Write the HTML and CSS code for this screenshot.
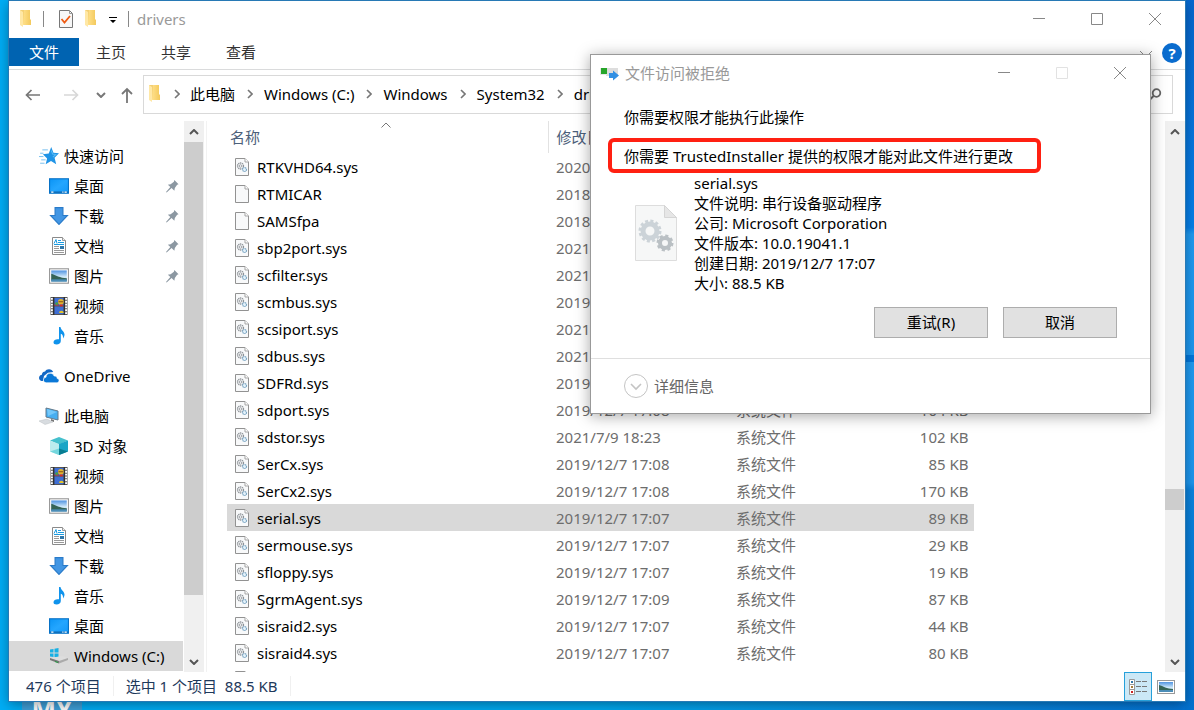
FILE: index.html
```html
<!DOCTYPE html>
<html lang="zh-CN">
<head>
  <meta charset="UTF-8">
  <meta name="viewport" content="width=device-width, initial-scale=1.0">
  <title>drivers</title>
  <link rel="stylesheet" href="styles.css">
</head>
<body>
  <!-- 图标 -->
  <svg class="sprite" aria-hidden="true">
    <defs>
      <linearGradient id="g-folder" x1="0" x2="1"><stop offset="0" stop-color="#ffe08a"/><stop offset="1" stop-color="#f3c95c"/></linearGradient>
      <linearGradient id="g-desk" x1="0" y1="0" x2="1" y2="1"><stop offset="0" stop-color="#0a94f5"/><stop offset=".5" stop-color="#24a6ff"/><stop offset="1" stop-color="#1297f8"/></linearGradient>
      <linearGradient id="g-sky" x1="0" y1="0" x2="0" y2="1"><stop offset="0" stop-color="#4f93e0"/><stop offset=".6" stop-color="#d9effb"/><stop offset="1" stop-color="#5b93b5"/></linearGradient>
    </defs>
    <symbol id="i-folder" viewBox="0 0 14 17">
      <path d="M1 0h6v14H1z" fill="#f3cf73"/><path d="M5 0h6v9l1 1v5H4z" fill="url(#g-folder)"/><path d="M1 0l3 2v15l-3-2z" fill="#ffe8a6"/>
    </symbol>
    <symbol id="i-check" viewBox="0 0 16 18">
      <path d="M1.500 .5h10l3 3v14h-13z" fill="#f7f7f7" stroke="#777"/><path d="M11.500 .5v3h3" fill="none" stroke="#999"/><path d="M3.500 9l3 3.500 5.500-6.500" fill="none" stroke="#ee5a12" stroke-width="1.800"/>
    </symbol>
    <symbol id="i-star" viewBox="0 0 18 16">
      <path d="M11 0l2 5 5 .5-4 4 1.500 6-4.700-3L6 15.500l1.300-5.300L3.500 6.500l5.300-.7z" fill="#2094e6"/><path d="M11 3l1.300 3.300 2.700.4-2.500 2.300" fill="none" stroke="#5cbcf5"/><path d="M3 2.500h5M1 5.500h3M0 8.500h4M2 11.500h4M1 14.500h4" stroke="#69b9ee" stroke-width=".8"/>
    </symbol>
    <symbol id="i-desktop" viewBox="0 0 18 14">
      <rect x=".5" y=".5" width="17" height="13" fill="url(#g-desk)" stroke="#0872c6"/><path d="M1 12.500h16" stroke="#0b5fa5"/><path d="M2 12.500h2M12 12.500h1M14 12.500h2" stroke="#fff"/>
    </symbol>
    <symbol id="i-down" viewBox="0 0 16 16">
      <path d="M4.500 .5h7v7h4L8 15.500.5 7.500h4z" fill="#4296e4" stroke="#2a7bc9"/>
    </symbol>
    <symbol id="i-doc" viewBox="0 0 16 18">
      <path d="M1.500 .5h10l3 3v14h-13z" fill="#fff" stroke="#8a8a8a"/><path d="M11.500 .5v3h3" fill="#eee" stroke="#999"/><path d="M3 6.500l2-4 1 4M7 3.500h3M7 5.500h6M3 7.500h10" fill="none" stroke="#1c9be0"/><path d="M3 9.500h5M3 11.500h5M3 13.500h10M3 15.500h10" stroke="#999"/><rect x="9" y="9" width="4" height="3" fill="#2f77a9"/>
    </symbol>
    <symbol id="i-picture" viewBox="0 0 18 14">
      <rect x=".5" y=".5" width="17" height="13" fill="#fff" stroke="#999"/><rect x="2" y="2" width="14" height="10" fill="url(#g-sky)"/><path d="M2 5c4 1 8 4 14 4v2H2z" fill="#356456"/><path d="M2 10h14v2H2z" fill="#4b8db7"/>
    </symbol>
    <symbol id="i-video" viewBox="0 0 18 19">
      <path d="M0 0h18v19H0z" fill="#555"/><path d="M1.500 1v18M16.500 1v18" stroke="#fff" stroke-width="2" stroke-dasharray="2 1"/><path d="M4 1h10v8H4zM4 10h10v8H4z" fill="#3f6fd4"/><path d="M3 0h1v19H3zM14 0h1v19h-1z" fill="#222"/><circle cx="11" cy="5" r="3" fill="#e3b52e"/><path d="M8.500 5h5" stroke="#7a4a18"/><path d="M4 8h5v1H4zM10 8h3v2h-3z" fill="#d52b20"/><circle cx="6.500" cy="7" r="1.500" fill="#43a047"/><path d="M9 17a2.500 2.500 0 015 0z" fill="#e3c52e"/>
    </symbol>
    <symbol id="i-music" viewBox="0 0 12 18">
      <path d="M6 0h1.500c.3 3 4 4.500 4 7.500 0 1.500-.6 2.800-1.500 4 .3-2.800-.6-4.300-2.200-4.800V14c0 2-1.800 3.500-4.300 3.500C1.500 17.500.5 16.500.5 15.200c0-1.700 2-3 4-3H6z" fill="#0f93ec"/>
    </symbol>
    <symbol id="i-cloud" viewBox="0 0 18 12">
      <path d="M3.500 10.500C1.500 10.500 0 9.500 0 7.700 0 6 1.200 5 2.600 4.800 2.800 3 4 2 5.500 2c.6-1.200 1.900-2 3.500-2 1.800 0 3.200 1 3.800 2.500L8 3 4.500 6z" fill="#1267c4"/><path d="M6.500 12C4.800 12 4 11 4 9.700 4 8.300 5 7.300 6.300 7.200 6.500 5 8 3.600 10 3.600c1.800 0 3 1 3.600 2.400 2 0 2.700 1 2.700 2.300 1 .1 1.700.8 1.700 1.800S17.200 12 16 12z" fill="#0a78d7" stroke="#fff" stroke-width=".5"/>
    </symbol>
    <symbol id="i-pc" viewBox="0 0 20 18">
      <path d="M7 1l12 3v9L7 10z" fill="#47aef0" stroke="#64798a"/><path d="M8 2l10 3-9 4z" fill="#74c8fa"/><path d="M12 12l3 1v2l-3-1z" fill="#777"/><path d="M0 14l8-2 6 3-8 2.500z" fill="#d8dce0" stroke="#bcc0c4" stroke-width=".5"/>
    </symbol>
    <symbol id="i-cube" viewBox="0 0 18 18">
      <path d="M9 0l9 3.500-9 4-9-4z" fill="#45c0cd"/><path d="M0 3.500l9 3.500v11l-9-3.500z" fill="#bdecee"/><path d="M18 3.500L9 7v11l9-3.500z" fill="#1aa5c6"/><path d="M9 11.500l9 3-9 3.500z" fill="#087d91"/><path d="M9 11.500l-9 3L9 18z" fill="#74d6dd"/>
    </symbol>
    <symbol id="i-drive" viewBox="0 0 20 16">
      <path d="M1 1.500l3.500-.5v3.500H1zM5.500 .8L9.500 0v4.500h-4zM1 5.500h3.500V9L1 8.500zM5.500 5.500h4v4l-4-.5z" fill="#16b0e4"/><path d="M1 10l12-2 6 2-9 3z" fill="#ddd"/><path d="M1 10l9 3v2.500L1 12z" fill="#777"/><path d="M10 13l9-3v2l-9 3.500z" fill="#aaa"/><path d="M6 13l3 1v1l-3-1z" fill="#25a244"/>
    </symbol>
    <symbol id="i-pin" viewBox="0 0 14 14">
      <path d="M9 0l4.500 4.500-1.500.5-2.500 3.500-.5 3L6 8.500.7 13.500 0 13l4.700-5.500L2 5l3-.5L8.500 2z" fill="#8c98a2"/>
    </symbol>
    <symbol id="i-file" viewBox="0 0 16 18">
      <path d="M1.500 .5h9.500l3.500 3.500v13.500h-13z" fill="#f8f9fa" stroke="#929292"/><path d="M11 .5v3.500h3.500" fill="#fff" stroke="#a5a5a5"/>
    </symbol>
    <symbol id="i-sys" viewBox="0 0 16 18">
      <path d="M1.500 .5h9.500l3.500 3.500v13.500h-13z" fill="#f8f9fa" stroke="#929292"/><path d="M11 .5v3.500h3.500" fill="#fff" stroke="#a5a5a5"/><circle cx="6.500" cy="8" r="3" fill="none" stroke="#8d9297" stroke-width="1.300" stroke-dasharray="1.300 .6"/><circle cx="6.500" cy="8" r="1.300" fill="none" stroke="#8d9297" stroke-width=".8"/><circle cx="10.500" cy="11.500" r="2" fill="#e4f2fb" stroke="#7ba5c2" stroke-width="1.200" stroke-dasharray="1.300 .5"/>
    </symbol>
    <symbol id="i-min" viewBox="0 0 12 12"><path d="M0 5.500h12" stroke="currentColor"/></symbol>
    <symbol id="i-max" viewBox="0 0 12 12"><path d="M.5 .5h11v11H.5z" fill="none" stroke="currentColor"/></symbol>
    <symbol id="i-close" viewBox="0 0 12 12"><path d="M0 0l12 12M12 0L0 12" stroke="currentColor"/></symbol>
    <symbol id="i-up" viewBox="0 0 10 6"><path d="M1 5l4-4 4 4" fill="none" stroke="currentColor" stroke-width="2"/></symbol>
    <symbol id="i-dn" viewBox="0 0 10 6"><path d="M1 1l4 4 4-4" fill="none" stroke="currentColor" stroke-width="2"/></symbol>
    <symbol id="i-right" viewBox="0 0 6 10"><path d="M1 1l4 4-4 4" fill="none" stroke="currentColor" stroke-width="1.600"/></symbol>
    <symbol id="i-back" viewBox="0 0 16 12"><path d="M15 6H1M6.500 1L1.500 6l5 5" fill="none" stroke="currentColor" stroke-width="1.700"/></symbol>
  </svg>

  <div class="desktop-label">MY</div>

  <main class="explorer">
    <header class="titlebar">
      <svg class="icon folder"><use href="#i-folder"/></svg>
      <span class="divider"></span>
      <button class="quick" aria-label="属性"><svg class="icon sheet"><use href="#i-check"/></svg></button>
      <button class="quick" aria-label="新建文件夹"><svg class="icon folder"><use href="#i-folder"/></svg></button>
      <button class="quick menu" aria-label="自定义快速访问工具栏"><svg width="8" height="6" viewBox="0 0 8 6"><path d="M0 0h8v1H0zM1 3h6L4 6z"/></svg></button>
      <span class="divider"></span>
      <h1 class="title">drivers</h1>
      <div class="controls">
        <button aria-label="最小化"><svg class="glyph"><use href="#i-min"/></svg></button>
        <button aria-label="最大化"><svg class="glyph"><use href="#i-max"/></svg></button>
        <button aria-label="关闭"><svg class="glyph"><use href="#i-close"/></svg></button>
      </div>
    </header>

    <nav class="ribbon">
      <button class="tab active">文件</button>
      <button class="tab">主页</button>
      <button class="tab">共享</button>
      <button class="tab">查看</button>
      <button class="expand" aria-label="展开功能区"><svg width="12" height="7" viewBox="0 0 12 7"><path d="M0 0l6 6 6-6" fill="none" stroke="#888"/></svg></button>
      <button class="help" aria-label="帮助">?</button>
    </nav>

    <div class="address">
      <div class="history">
        <button aria-label="后退"><svg class="arrow"><use href="#i-back"/></svg></button>
        <button class="off" aria-label="前进"><svg class="arrow" viewBox="0 0 16 12"><path d="M1 6h14M9.500 1l5 5-5 5" fill="none" stroke="currentColor" stroke-width="1.700"/></svg></button>
        <button class="recent" aria-label="最近位置"><svg class="chev"><use href="#i-dn"/></svg></button>
        <button class="parent" aria-label="上移"><svg width="12" height="16" viewBox="0 0 12 16"><path d="M6 16V2M1 7l5-5 5 5" fill="none" stroke="currentColor" stroke-width="1.800"/></svg></button>
      </div>
      <div class="path">
        <svg class="icon folder"><use href="#i-folder"/></svg>
        <svg class="sep"><use href="#i-right"/></svg><a href="#">此电脑</a>
        <svg class="sep"><use href="#i-right"/></svg><a href="#">Windows (C:)</a>
        <svg class="sep"><use href="#i-right"/></svg><a href="#">Windows</a>
        <svg class="sep"><use href="#i-right"/></svg><a href="#">System32</a>
        <svg class="sep"><use href="#i-right"/></svg><a href="#">drivers</a>
      </div>
      <div class="search">
        <input type="search" aria-label="搜索">
        <svg width="14" height="14" viewBox="0 0 14 14"><circle cx="8.500" cy="5" r="3.800" fill="none" stroke="#666" stroke-width="1.800"/><path d="M5.500 8L1 12.500" stroke="#666" stroke-width="2"/></svg>
      </div>
    </div>

    <div class="content">
      <nav class="tree">
        <a class="root" href="#"><svg class="icon"><use href="#i-star"/></svg>快速访问</a>
        <a href="#"><svg class="icon"><use href="#i-desktop"/></svg>桌面<svg class="pin"><use href="#i-pin"/></svg></a>
        <a href="#"><svg class="icon"><use href="#i-down"/></svg>下载<svg class="pin"><use href="#i-pin"/></svg></a>
        <a href="#"><svg class="icon"><use href="#i-doc"/></svg>文档<svg class="pin"><use href="#i-pin"/></svg></a>
        <a href="#"><svg class="icon"><use href="#i-picture"/></svg>图片<svg class="pin"><use href="#i-pin"/></svg></a>
        <a href="#"><svg class="icon"><use href="#i-video"/></svg>视频</a>
        <a href="#"><svg class="icon"><use href="#i-music"/></svg>音乐</a>
        <a class="root" href="#"><svg class="icon"><use href="#i-cloud"/></svg>OneDrive</a>
        <a class="root" href="#"><svg class="icon"><use href="#i-pc"/></svg>此电脑</a>
        <a href="#"><svg class="icon"><use href="#i-cube"/></svg>3D 对象</a>
        <a href="#"><svg class="icon"><use href="#i-video"/></svg>视频</a>
        <a href="#"><svg class="icon"><use href="#i-picture"/></svg>图片</a>
        <a href="#"><svg class="icon"><use href="#i-doc"/></svg>文档</a>
        <a href="#"><svg class="icon"><use href="#i-down"/></svg>下载</a>
        <a href="#"><svg class="icon"><use href="#i-music"/></svg>音乐</a>
        <a href="#"><svg class="icon"><use href="#i-desktop"/></svg>桌面</a>
        <a class="current" href="#"><svg class="icon"><use href="#i-drive"/></svg>Windows (C:)</a>
      </nav>
      <div class="scrollbar tree-scroll">
        <button aria-label="向上滚动"><svg class="chev"><use href="#i-up"/></svg></button>
        <div class="track"><div class="thumb"></div></div>
        <button aria-label="向下滚动"><svg class="chev"><use href="#i-dn"/></svg></button>
      </div>

      <div class="files">
        <table>
          <colgroup><col class="c-name"><col class="c-date"><col class="c-type"><col class="c-size"></colgroup>
          <thead>
            <tr>
              <th>名称<svg class="sort" viewBox="0 0 10 6"><path d="M.5 5.500L5 1l4.500 4.500" fill="none" stroke="#777"/></svg></th>
              <th>修改日期</th><th></th><th></th>
            </tr>
          </thead>
          <tbody>
            <tr><td><svg class="file"><use href="#i-sys"/></svg>RTKVHD64.sys</td><td>2020</td><td></td><td></td></tr>
            <tr><td><svg class="file"><use href="#i-file"/></svg>RTMICAR</td><td>2018</td><td></td><td></td></tr>
            <tr><td><svg class="file"><use href="#i-file"/></svg>SAMSfpa</td><td>2018</td><td></td><td></td></tr>
            <tr><td><svg class="file"><use href="#i-sys"/></svg>sbp2port.sys</td><td>2021</td><td></td><td></td></tr>
            <tr><td><svg class="file"><use href="#i-sys"/></svg>scfilter.sys</td><td>2021</td><td></td><td></td></tr>
            <tr><td><svg class="file"><use href="#i-sys"/></svg>scmbus.sys</td><td>2019</td><td></td><td></td></tr>
            <tr><td><svg class="file"><use href="#i-sys"/></svg>scsiport.sys</td><td>2021</td><td></td><td></td></tr>
            <tr><td><svg class="file"><use href="#i-sys"/></svg>sdbus.sys</td><td>2021</td><td></td><td></td></tr>
            <tr><td><svg class="file"><use href="#i-sys"/></svg>SDFRd.sys</td><td>2019</td><td></td><td></td></tr>
            <tr><td><svg class="file"><use href="#i-sys"/></svg>sdport.sys</td><td>2019/12/7 17:08</td><td>系统文件</td><td>104 KB</td></tr>
            <tr><td><svg class="file"><use href="#i-sys"/></svg>sdstor.sys</td><td>2021/7/9 18:23</td><td>系统文件</td><td>102 KB</td></tr>
            <tr><td><svg class="file"><use href="#i-sys"/></svg>SerCx.sys</td><td>2019/12/7 17:08</td><td>系统文件</td><td>85 KB</td></tr>
            <tr><td><svg class="file"><use href="#i-sys"/></svg>SerCx2.sys</td><td>2019/12/7 17:08</td><td>系统文件</td><td>170 KB</td></tr>
            <tr class="selected"><td><svg class="file"><use href="#i-sys"/></svg>serial.sys</td><td>2019/12/7 17:07</td><td>系统文件</td><td>89 KB</td></tr>
            <tr><td><svg class="file"><use href="#i-sys"/></svg>sermouse.sys</td><td>2019/12/7 17:07</td><td>系统文件</td><td>29 KB</td></tr>
            <tr><td><svg class="file"><use href="#i-sys"/></svg>sfloppy.sys</td><td>2019/12/7 17:07</td><td>系统文件</td><td>19 KB</td></tr>
            <tr><td><svg class="file"><use href="#i-sys"/></svg>SgrmAgent.sys</td><td>2019/12/7 17:09</td><td>系统文件</td><td>87 KB</td></tr>
            <tr><td><svg class="file"><use href="#i-sys"/></svg>sisraid2.sys</td><td>2019/12/7 17:07</td><td>系统文件</td><td>44 KB</td></tr>
            <tr><td><svg class="file"><use href="#i-sys"/></svg>sisraid4.sys</td><td>2019/12/7 17:07</td><td>系统文件</td><td>80 KB</td></tr>
            <tr><td><svg class="file"><use href="#i-sys"/></svg></td><td></td><td></td><td></td></tr>
          </tbody>
        </table>
      </div>
      <div class="scrollbar list-scroll">
        <button aria-label="向上滚动"><svg class="chev"><use href="#i-up"/></svg></button>
        <div class="track"><div class="thumb"></div></div>
        <button aria-label="向下滚动"><svg class="chev"><use href="#i-dn"/></svg></button>
      </div>
    </div>

    <footer class="status">
      <span class="count">476 个项目</span>
      <span class="picked">选中 1 个项目&nbsp; 88.5 KB</span>
      <div class="views">
        <button class="on" aria-label="详细信息视图"><svg width="18" height="16" viewBox="0 0 18 16"><path d="M.5 .5h5v15h-5zM.5 5.500h5M.5 10.500h5" fill="#fff" stroke="#999"/><path d="M2 2h2v2H2z" fill="#2f77a9"/><path d="M2 7h2v2H2z" fill="#a57d3a"/><path d="M2 12h2v2H2z" fill="#c22"/><path d="M7 2.500h5M13 2.500h5M7 7.500h5M13 7.500h5M7 12.500h5M13 12.500h5" stroke="#777"/></svg></button>
        <button aria-label="大图标视图"><svg width="18" height="14"><use href="#i-picture"/></svg></button>
      </div>
    </footer>
  </main>

  <section class="dialog" role="dialog" aria-labelledby="dialog-title">
    <header class="dialog-title">
      <svg width="20" height="16" viewBox="0 0 20 16"><path d="M6 3h12v8H6z" fill="#ddd"/><path d="M0 3h7v7H0z" fill="#e8e8e8"/><path d="M1 3h6v6H1z" fill="#27a52a"/><path d="M9 8h4V5.500l6 5-6 5V13H9z" fill="#3390e3"/></svg>
      <h2 id="dialog-title">文件访问被拒绝</h2>
      <div class="controls">
        <button aria-label="最小化"><svg class="glyph"><use href="#i-min"/></svg></button>
        <button aria-label="最大化" disabled><svg class="glyph"><use href="#i-max"/></svg></button>
        <button aria-label="关闭"><svg class="glyph"><use href="#i-close"/></svg></button>
      </div>
    </header>
    <p class="lead">你需要权限才能执行此操作</p>
    <p class="marked">你需要 TrustedInstaller 提供的权限才能对此文件进行更改</p>
    <div class="details">
      <svg width="42" height="56" viewBox="0 0 42 56">
        <path d="M.5 .5h29l12 12v43H.5z" fill="#f6f7f7" stroke="#ddd"/><path d="M29.500 .5v12h12z" fill="#e6e6e6" stroke="#d5d5d5"/>
        <g fill="none" stroke="#ccd3d8"><circle cx="15" cy="26" r="7" stroke-width="5"/><circle cx="15" cy="26" r="10" stroke-width="3" stroke-dasharray="3 2.240"/></g>
        <g fill="none" stroke="#bac0c4"><circle cx="30" cy="38" r="5" stroke-width="4"/><circle cx="30" cy="38" r="7" stroke-width="3" stroke-dasharray="3 2.500"/></g>
      </svg>
      <ul>
        <li>serial.sys</li>
        <li>文件说明: 串行设备驱动程序</li>
        <li>公司: Microsoft Corporation</li>
        <li>文件版本: 10.0.19041.1</li>
        <li>创建日期: 2019/12/7 17:07</li>
        <li>大小: 88.5 KB</li>
      </ul>
    </div>
    <div class="actions">
      <button>重试(R)</button>
      <button>取消</button>
    </div>
    <footer class="more">
      <button><svg width="24" height="24" viewBox="0 0 24 24"><circle cx="12" cy="12" r="11.500" fill="#fff" stroke="#c4c4c4"/><path d="M7 10l5 5 5-5" fill="none" stroke="#c4c4c4" stroke-width="1.600"/></svg>详细信息</button>
    </footer>
  </section>
</body>
</html>
```
FILE: styles.css
```css
/* Reset */
* {
  margin: 0;
  padding: 0;
  box-sizing: border-box;
}

body {
  height: 100vh;
  padding: 1px 9px 9px;
  overflow: hidden;
  position: relative;
  font-family: "Noto Sans", "Noto Sans CJK SC", sans-serif;
  font-size: 15px;
  line-height: 20px;
  color: #000;
  background:
    linear-gradient(180deg, #0668cf, #0580ea 32%, #1f9bf2 33%, #1c97f0 50%, #0077dd 50%, #0077dd 51%, #1f9bf2 51%, #1c97f0 68%, #0a84e0 69%, #0372d0) right / 9px 100% no-repeat,
    linear-gradient(90deg, #00adf5 0%, #00a8ee 50%, #0a8fe0 75%, #0372d4 100%);
}

button,
input {
  font: inherit;
  color: inherit;
  border: none;
  background: none;
}

a {
  color: inherit;
  text-decoration: none;
}

.sprite {
  position: absolute;
  width: 0;
  height: 0;
}

.desktop-label {
  position: absolute;
  left: 22px;
  bottom: -14px;
  width: 60px;
  font-size: 26px;
  font-weight: bold;
  line-height: 30px;
  text-align: center;
  color: #fff;
  background: #3f9fd8;
}

/* 主窗口 */
.explorer {
  position: relative;
  display: flex;
  flex-direction: column;
  height: 100%;
  background: #fff;
  box-shadow: 0 0 0 1px #2779b5, 0 3px 12px rgba(0, 0, 0, 0.4);
}

.titlebar {
  display: flex;
  align-items: center;
  height: 37px;
  padding: 0 1px 2px 10px;
}

.folder {
  width: 14px;
  height: 17px;
}

.sheet {
  width: 16px;
  height: 18px;
}

.titlebar .folder,
.titlebar .sheet {
  display: block;
}

.divider {
  width: 1px;
  height: 16px;
  margin-left: 10px;
  background: #888;
}

.quick {
  margin-left: 10px;
}

.divider + .quick {
  margin-left: 14px;
}

.menu svg {
  display: block;
  margin: 2px 1px 0;
}

.title {
  margin-left: 8px;
  font-size: 15px;
  font-weight: normal;
  color: #999;
}

.controls {
  display: flex;
  margin-left: auto;
  color: #888;
}

.controls button {
  display: flex;
  align-items: center;
  justify-content: center;
  width: 58px;
  height: 34px;
}

.controls button:disabled {
  color: #e2e2e2;
}

.glyph {
  width: 12px;
  height: 12px;
}

.ribbon {
  display: flex;
  gap: 1px;
  height: 32px;
  padding-bottom: 3px;
  border-bottom: 1px solid #dadbdc;
}

.tab {
  padding: 0 17px;
  color: #333;
}

.tab.active {
  padding: 0 20px;
  margin-right: -1px;
  color: #fff;
  background: #0063b1;
}

.expand {
  width: 12px;
  margin-left: auto;
}

.help {
  width: 20px;
  height: 20px;
  margin: 5px 3px 0 9px;
  border-radius: 50%;
  font-weight: bold;
  color: #fff;
  background: #0a6cce;
}

/* 地址栏 */
.address {
  display: flex;
  height: 51px;
  padding: 5px 12px 7px 0;
}

.history {
  display: flex;
  align-items: center;
  width: 134px;
  padding-left: 16px;
  color: #777;
}

.history button {
  display: flex;
}

.history .off {
  margin-left: 22px;
  color: #d8d8d8;
}

.history .recent {
  margin-left: 17px;
}

.history .parent {
  margin-left: 15px;
}

.arrow {
  width: 16px;
  height: 12px;
}

.chev {
  width: 10px;
  height: 6px;
}

.path {
  display: flex;
  align-items: center;
  flex: 1;
  padding: 0 0 2px 4px;
  border: 1px solid #d9d9d9;
}

.sep {
  width: 6px;
  height: 10px;
  margin: 0 11px 0 12px;
  color: #777;
}

.path .folder + .sep {
  margin-right: 10px;
}

.search {
  display: flex;
  align-items: center;
  width: 320px;
  margin-left: 12px;
  padding-right: 10px;
  border: 1px solid #d9d9d9;
}

.search input {
  flex: 1;
  min-width: 0;
}

.content {
  display: flex;
  flex: 1;
  min-height: 0;
}

/* 导航窗格 */
.tree {
  width: 174px;
  padding-top: 20px;
  overflow: hidden;
}

.tree a {
  display: flex;
  align-items: center;
  height: 30px;
  padding-left: 40px;
  white-space: nowrap;
}

.tree .root {
  padding-left: 30px;
}

.tree a + .root {
  margin-top: 10px;
}

.tree .icon {
  width: 20px;
  height: 18px;
  margin-right: 5px;
}

.tree .current {
  background: #d9d9d9;
}

.pin {
  width: 13px;
  height: 13px;
  margin: 0 4px 0 auto;
}

.scrollbar {
  display: flex;
  flex-direction: column;
  width: 20px;
  background: #f0f0f0;
}

.scrollbar button {
  display: flex;
  align-items: center;
  justify-content: center;
  height: 21px;
  color: #555;
}

.track {
  display: flex;
  flex-direction: column;
  flex: 1;
}

.thumb {
  width: 19px;
  background: #cdcdcd;
}

.tree-scroll {
  margin-left: 1px;
}

.tree-scroll .thumb {
  height: 89%;
}

.list-scroll .track {
  padding-top: 347px;
}

.list-scroll .thumb {
  height: 21px;
}

/* 文件列表 */
.files {
  flex: 1;
  min-width: 0;
  margin-left: 2px;
  padding-left: 20px;
  overflow: hidden;
  border-left: 1px solid #f2f2f2;
}

table {
  width: 747px;
  table-layout: fixed;
  border-collapse: collapse;
}

.c-name {
  width: 321px;
}

.c-date {
  width: 180px;
}

.c-type {
  width: 141px;
}

th {
  position: relative;
  height: 32px;
  padding: 0 8px;
  font-weight: normal;
  text-align: left;
  color: #4c607a;
  border-right: 1px solid #e2e2e2;
}

th:first-child {
  padding-left: 3px;
}

.sort {
  position: absolute;
  top: 1px;
  left: 48%;
  width: 10px;
  height: 6px;
}

td {
  height: 27px;
  padding: 0 8px;
  color: #6d6d6d;
  white-space: nowrap;
}

td:first-child {
  padding-left: 7px;
  color: #000;
}

td:last-child {
  padding-right: 5px;
  text-align: right;
}

.file {
  width: 16px;
  height: 18px;
  margin-right: 7px;
  vertical-align: -3px;
}

.selected {
  background: #d9d9d9;
}

/* 状态栏 */
.status {
  display: flex;
  align-items: center;
  height: 29px;
  padding-left: 17px;
  color: #1e395b;
}

.count,
.picked {
  padding-right: 12px;
  margin: 0 12px 2px 0;
  border-right: 1px solid #f0f0f0;
}

.views {
  display: flex;
  align-self: stretch;
  margin-left: auto;
  padding-right: 5px;
}

.views button {
  display: flex;
  align-items: center;
  justify-content: center;
  width: 28px;
}

.views .on {
  border: 1px solid #26a0da;
  background: #cbe8f6;
}

/* 对话框 */
.dialog {
  position: absolute;
  top: 54px;
  right: 43px;
  width: 561px;
  border: 1px solid #999;
  background: #fff;
  box-shadow: 0 2px 14px rgba(0, 0, 0, 0.35);
}

.dialog-title {
  display: flex;
  align-items: center;
  height: 36px;
  padding: 0 1px 0 9px;
}

.dialog-title h2 {
  margin-left: 5px;
  font-size: 15px;
  font-weight: normal;
  color: #999;
}

.lead {
  padding: 16px 33px 11px;
}

.marked {
  margin: 0 109px 0 17px;
  padding: 4px 12px 3px;
  white-space: nowrap;
  border: 4px solid #ff2012;
  border-radius: 6px;
}

.details {
  display: flex;
  align-items: center;
  gap: 17px;
  padding-left: 44px;
}

.details ul {
  list-style: none;
}

.actions {
  display: flex;
  justify-content: flex-end;
  gap: 15px;
  padding: 14px 33px 20px;
}

.actions button {
  width: 114px;
  height: 31px;
  padding-bottom: 1px;
  border: 1px solid #adadad;
  background: #e1e1e1;
}

.more {
  padding: 15px 33px;
  border-top: 1px solid #dfdfdf;
}

.more button {
  display: flex;
  align-items: center;
  gap: 6px;
  color: #666;
}
```
